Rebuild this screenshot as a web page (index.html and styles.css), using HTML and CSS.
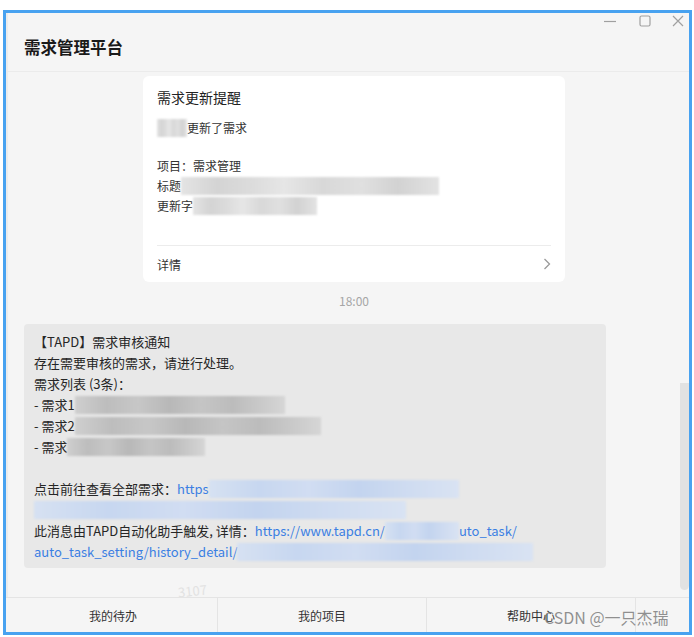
FILE: index.html
```html
<!DOCTYPE html>
<html lang="zh-CN">

<head>
    <meta charset="UTF-8">
    <meta name="viewport" content="width=device-width, initial-scale=1.0">
    <title>需求管理平台</title>
    <link rel="stylesheet" href="styles.css">
</head>

<body>
    <div class="window">
        <div class="header">
            <div class="controls">
                <svg class="ctl ctl-min" width="12" height="12" viewBox="0 0 12 12"><path d="M0 6.5h12" stroke="#a0a0a0" stroke-width="1.2"/></svg>
                <svg class="ctl ctl-max" width="12" height="12" viewBox="0 0 12 12"><rect x="1" y="1" width="10" height="10" rx="1.5" fill="none" stroke="#a0a0a0" stroke-width="1.2"/></svg>
                <svg class="ctl ctl-close" width="12" height="12" viewBox="0 0 12 12"><path d="M1 1l10 10M11 1L1 11" stroke="#a0a0a0" stroke-width="1.2"/></svg>
            </div>
            <div class="title">需求管理平台</div>
        </div>

        <div class="chat">
            <div class="card">
                <div class="card-body">
                    <div class="card-title">需求更新提醒</div>
                    <div class="card-line first"><span class="mosaic m-grey" style="width: 30px;"></span>更新了需求</div>
                    <div class="card-fields">
                        <div class="card-line">项目：需求管理</div>
                        <div class="card-line">标题<span class="mosaic m-grey" style="width: 258px;"></span></div>
                        <div class="card-line">更新字<span class="mosaic m-grey" style="width: 124px;"></span></div>
                    </div>
                </div>
                <div class="card-foot">
                    <span>详情</span>
                    <svg width="8" height="12" viewBox="0 0 8 12"><path d="M1.5 1l5 5-5 5" fill="none" stroke="#9a9a9a" stroke-width="1.3"/></svg>
                </div>
            </div>

            <div class="time">18:00</div>

            <div class="bubble">
                <div>【TAPD】需求审核通知</div>
                <div>存在需要审核的需求，请进行处理。</div>
                <div>需求列表 (3条)：</div>
                <div>- 需求1<span class="mosaic m-dark" style="width: 210px;"></span></div>
                <div>- 需求2<span class="mosaic m-dark" style="width: 246px;"></span></div>
                <div>- 需求<span class="mosaic m-dark" style="width: 138px;"></span></div>
                <div class="blank"></div>
                <div>点击前往查看全部需求：<a class="link">https</a><span class="mosaic m-blue" style="width: 250px;"></span></div>
                <div><span class="mosaic m-blue" style="width: 372px;"></span></div>
                <div>此消息由TAPD自动化助手触发, 详情：<a class="link">https://www.tapd.cn/</a><span class="mosaic m-blue" style="width: 74px;"></span><a class="link">uto_task/</a></div>
                <div><a class="link">auto_task_setting/history_detail/</a><span class="mosaic m-blue" style="width: 296px;"></span></div>
            </div>

            <div class="ghost">3107</div>
        </div>

        <div class="tabs">
            <div class="tab">我的待办</div>
            <div class="tab">我的项目</div>
            <div class="tab">帮助中心</div>
        </div>

        <div class="scroll-thumb"></div>
        <div class="watermark">CSDN @一只杰瑞</div>
    </div>
</body>

</html>
```

FILE: styles.css
```css
body {
    margin: 0;
    background: #ffffff;
    font-family: "Noto Sans CJK SC", "Noto Sans", sans-serif;
    color: #333333;
}

.window {
    position: relative;
    display: flex;
    flex-direction: column;
    width: 689px;
    height: 625px;
    margin: 10px 0 0 3px;
    box-sizing: border-box;
    border: 3px solid #48a2f0;
    background: #f5f5f5;
    box-shadow: inset 2px 0 0 #ececec;
    overflow: hidden;
}

.header {
    height: 59px;
    box-sizing: border-box;
    padding-left: 18px;
    border-bottom: 1px solid #ebebeb;
}

.controls {
    display: flex;
    justify-content: flex-end;
    height: 14px;
    padding-right: 5px;
    padding-top: 2px;
}

.ctl-max {
    margin-left: 23px;
}

.ctl-close {
    margin-left: 21px;
}

.title {
    margin-top: 6px;
    font-size: 16.5px;
    font-weight: bold;
    line-height: 24px;
    color: #1a1a1a;
}

.chat {
    flex: 1;
    position: relative;
    padding-top: 4px;
}

.card {
    width: 422px;
    margin-left: 137px;
    background: #ffffff;
    border-radius: 6px;
}

.card-body {
    padding: 11px 14px 0 14px;
}

.card-title {
    font-size: 14px;
    line-height: 20px;
    color: #222222;
}

.card-line {
    display: flex;
    align-items: center;
    font-size: 12px;
    line-height: 20px;
    color: #333333;
}

.card-line.first {
    margin-top: 11px;
}

.card-fields {
    margin-top: 18px;
    padding-bottom: 29px;
}

.card-foot {
    display: flex;
    justify-content: space-between;
    align-items: center;
    height: 36px;
    margin: 0 14px;
    border-top: 1px solid #ececec;
    font-size: 12px;
    color: #333333;
}

.time {
    width: 422px;
    margin: 9px 0 0 137px;
    font-size: 12px;
    line-height: 20px;
    text-align: center;
    color: #a6a6a6;
}

.bubble {
    width: 582px;
    margin: 13px 0 0 18px;
    padding: 7px 10px 6px 10px;
    box-sizing: border-box;
    background: #e8e8e8;
    border-radius: 4px;
    font-size: 13px;
    line-height: 21px;
    color: #262626;
}

.bubble div {
    display: flex;
    align-items: center;
    height: 21px;
    white-space: nowrap;
}

.link {
    color: #3b7fe3;
}

.mosaic {
    display: inline-block;
    height: 18px;
    filter: blur(1px);
}

.m-grey {
    background: linear-gradient(90deg, #e4e4e4 0%, #d4d4d4 14%, #dcdcdc 28%, #e6e6e6 40%, #d8d8d8 55%, #e0e0e0 70%, #d2d2d2 84%, #e3e3e3 100%);
}

.m-dark {
    background: linear-gradient(90deg, #cfcfcf 0%, #bdbdbd 15%, #c7c7c7 30%, #b8b8b8 45%, #c5c5c5 60%, #bcbcbc 75%, #cbcbcb 90%, #d6d6d6 100%);
}

.m-blue {
    background: linear-gradient(90deg, #d6e1f2 0%, #c7d7f0 20%, #d1ddf2 40%, #c3d4ef 60%, #cfdcf1 80%, #d9e3f3 100%);
}

.ghost {
    position: absolute;
    left: 172px;
    bottom: -2px;
    font-size: 13px;
    line-height: 16px;
    color: #e2e2e2;
    transform: rotate(-6deg);
}

.tabs {
    display: flex;
    height: 35px;
    box-sizing: border-box;
    padding-left: 3px;
    border-top: 1px solid #e4e4e4;
    background: #f5f5f5;
    position: relative;
}

.tab {
    display: flex;
    justify-content: center;
    align-items: center;
    width: 209px;
    border-right: 1px solid #e4e4e4;
    box-sizing: border-box;
    font-size: 12px;
    color: #333333;
}

.scroll-thumb {
    position: absolute;
    left: 674px;
    top: 370px;
    width: 9px;
    height: 207px;
    background: #e2e2e2;
    border-radius: 0 0 5px 5px;
}

.watermark {
    position: absolute;
    left: 538px;
    top: 594px;
    font-size: 16px;
    line-height: 20px;
    color: rgba(110, 110, 110, 0.75);
}
```
